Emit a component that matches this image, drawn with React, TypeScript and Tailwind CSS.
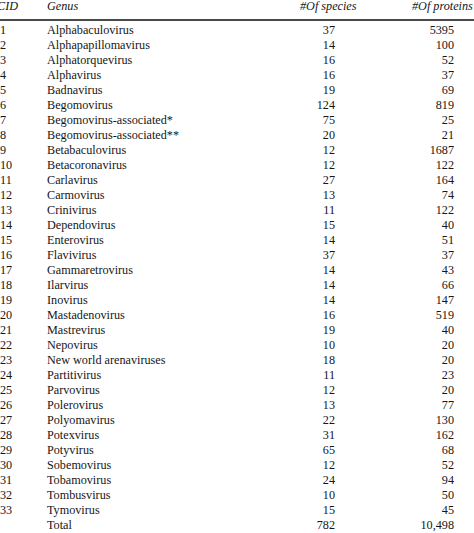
const rows: Array<[string, string, string, string]> = [
  ["1", "Alphabaculovirus", "37", "5395"],
  ["2", "Alphapapillomavirus", "14", "100"],
  ["3", "Alphatorquevirus", "16", "52"],
  ["4", "Alphavirus", "16", "37"],
  ["5", "Badnavirus", "19", "69"],
  ["6", "Begomovirus", "124", "819"],
  ["7", "Begomovirus-associated*", "75", "25"],
  ["8", "Begomovirus-associated**", "20", "21"],
  ["9", "Betabaculovirus", "12", "1687"],
  ["10", "Betacoronavirus", "12", "122"],
  ["11", "Carlavirus", "27", "164"],
  ["12", "Carmovirus", "13", "74"],
  ["13", "Crinivirus", "11", "122"],
  ["14", "Dependovirus", "15", "40"],
  ["15", "Enterovirus", "14", "51"],
  ["16", "Flavivirus", "37", "37"],
  ["17", "Gammaretrovirus", "14", "43"],
  ["18", "Ilarvirus", "14", "66"],
  ["19", "Inovirus", "14", "147"],
  ["20", "Mastadenovirus", "16", "519"],
  ["21", "Mastrevirus", "19", "40"],
  ["22", "Nepovirus", "10", "20"],
  ["23", "New world arenaviruses", "18", "20"],
  ["24", "Partitivirus", "11", "23"],
  ["25", "Parvovirus", "12", "20"],
  ["26", "Polerovirus", "13", "77"],
  ["27", "Polyomavirus", "22", "130"],
  ["28", "Potexvirus", "31", "162"],
  ["29", "Potyvirus", "65", "68"],
  ["30", "Sobemovirus", "12", "52"],
  ["31", "Tobamovirus", "24", "94"],
  ["32", "Tombusvirus", "10", "50"],
  ["33", "Tymovirus", "15", "45"],
  ["", "Total", "782", "10,498"],
];

export default function App() {
  return (
    <div className="h-[533px] w-[474px] overflow-hidden bg-white font-['Liberation_Serif','Times_New_Roman',serif] text-[12.2px] text-[#161616]">
      <div className="mt-[-1px] flex h-[15px] whitespace-nowrap leading-[15px] italic">
        <div className="ml-[-3px] w-[50px]">CID</div>
        <div className="w-[253px]">Genus</div>
        <div className="w-[112px]">#Of species</div>
        <div>#Of proteins</div>
      </div>
      <div className="mt-[5.3px] h-[1.7px] bg-[#4a4a4a]" />
      <div className="mt-[2.4px]">
        {rows.map(([cid, genus, species, proteins]) => (
          <div key={genus} className="flex h-[15px] whitespace-nowrap leading-[15px]">
            <div className="w-[47px]">{cid}</div>
            <div className="w-[253px]">{genus}</div>
            <div className="w-[35px] text-right">{species}</div>
            <div className="w-[119px] text-right">{proteins}</div>
          </div>
        ))}
      </div>
    </div>
  );
}
